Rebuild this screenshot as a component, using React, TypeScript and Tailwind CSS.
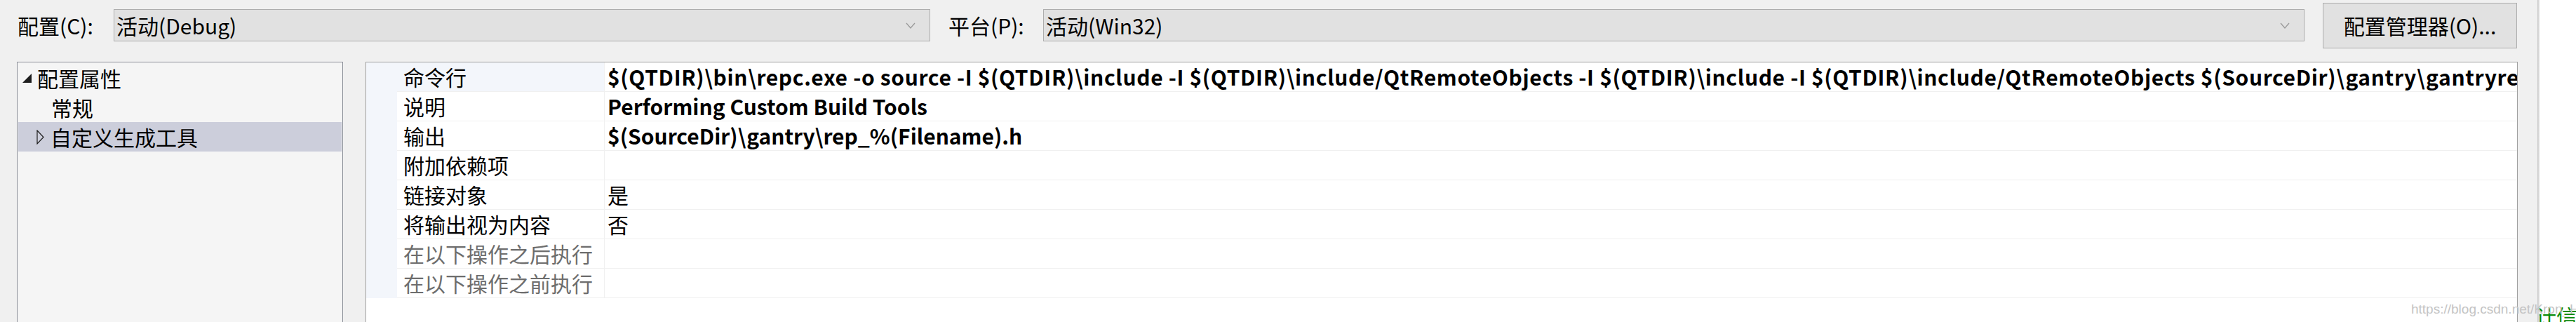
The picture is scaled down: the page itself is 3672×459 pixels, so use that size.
const FONT = "font-['Noto_Sans_CJK_SC','Microsoft_YaHei',sans-serif]";

type Row = { label: string; value?: string; bold?: boolean; muted?: boolean; wide?: boolean };

const ROWS: Row[] = [
  {
    label: '命令行',
    value:
      '$(QTDIR)\\bin\\repc.exe -o source -I $(QTDIR)\\include -I $(QTDIR)\\include/QtRemoteObjects -I $(QTDIR)\\include -I $(QTDIR)\\include/QtRemoteObjects $(SourceDir)\\gantry\\gantryremote.rep $(SourceDir)\\gantry\\rep_%(Filename).h',
    bold: true,
    wide: true,
  },
  { label: '说明', value: 'Performing Custom Build Tools', bold: true },
  { label: '输出', value: '$(SourceDir)\\gantry\\rep_%(Filename).h', bold: true },
  { label: '附加依赖项' },
  { label: '链接对象', value: '是' },
  { label: '将输出视为内容', value: '否' },
  { label: '在以下操作之后执行', muted: true },
  { label: '在以下操作之前执行', muted: true },
];

function Chevron() {
  return (
    <svg width="14" height="9" viewBox="0 0 14 9" className="shrink-0">
      <polyline points="1,1 7,8 13,1" fill="none" stroke="#9a9a9a" strokeWidth="1.3" />
    </svg>
  );
}

function Combo({ text, width }: { text: string; width: string }) {
  return (
    <div
      className={`${width} mt-[13px] h-[46px] flex items-center justify-between border border-[#adadad] bg-[#e1e1e1] pl-[3px] pr-[20px]`}
    >
      <span className="leading-[44px]">{text}</span>
      <Chevron />
    </div>
  );
}

export default function App() {
  return (
    <div className={`relative flex w-[3672px] h-[459px] overflow-hidden text-[30px] text-black ${FONT}`}>
      <div className="w-[3617px] h-full bg-[#f0f0f0] flex flex-col">
        {/* 顶部 配置/平台 */}
        <div className="flex h-[88px] shrink-0">
          <div className="w-[162px] pl-[25px] pt-[13px] leading-[46px]">配置(C):</div>
          <Combo text="活动(Debug)" width="w-[1164px]" />
          <div className="w-[161px] pl-[26px] pt-[13px] leading-[46px]">平台(P):</div>
          <Combo text="活动(Win32)" width="w-[1798px]" />
          <button className="ml-[26px] mt-[4px] w-[277px] h-[65px] border border-[#adadad] bg-[#e1e1e1] leading-[63px]">
            配置管理器(O)...
          </button>
        </div>

        {/* 树 + 属性表 */}
        <div className="flex flex-1 pl-[24px] gap-[32px]">
          <div className="w-[465px] h-[400px] border border-[#8c9099] bg-[#f5f5f5] p-px">
            <div className="flex items-center h-[42px] pl-[5px]">
              <svg width="15" height="15" viewBox="0 0 15 15" className="mr-[7px]">
                <polygon points="14,1 14,14 1,14" fill="#1e1e1e" />
              </svg>
              <span>配置属性</span>
            </div>
            <div className="flex items-center h-[42px] pl-[47px]">常规</div>
            <div className="flex items-center h-[42px] pl-[26px] bg-[#cccedb]">
              <svg width="11" height="21" viewBox="0 0 11 21" className="mr-[9px]">
                <polygon points="1,1 10,10.5 1,20" fill="none" stroke="#1e1e1e" strokeWidth="1.2" />
              </svg>
              <span>自定义生成工具</span>
            </div>
          </div>

          <div className="w-[3068px] h-[400px] border border-[#a0a0a0] bg-white">
            {ROWS.map((row, i) => (
              <div key={row.label} className="flex h-[42px]">
                <div className="w-[44px] shrink-0 bg-[#f3f6fb]" />
                <div
                  className={`w-[296px] shrink-0 pl-[9px] leading-[41px] border-b border-r border-[#f0f0f0] ${
                    i === 0 ? 'bg-[#f3f6fb]' : 'bg-white'
                  } ${row.muted ? 'text-[#6d6d6d]' : ''}`}
                >
                  {row.label}
                </div>
                <div
                  className={`flex-1 min-w-0 pl-[4px] leading-[41px] whitespace-nowrap overflow-hidden border-b border-[#f0f0f0] ${
                    row.bold ? 'font-bold' : ''
                  } ${row.wide ? 'tracking-[0.65px]' : ''}`}
                >
                  {row.value ?? ''}
                </div>
              </div>
            ))}
          </div>
        </div>
      </div>

      <div className="w-[3px] h-full bg-gradient-to-r from-[#c4c4c4] to-[#e8e8e8]" />
      <div className="flex-1 h-full bg-white relative overflow-hidden">
        <span className="absolute left-[-6px] top-[434px] text-[30px] leading-[32px] whitespace-nowrap text-[#0a8a0a]">计信</span>
      </div>

      {/* 水印 */}
      <span className="absolute left-[3437px] top-[429px] font-['Liberation_Sans',sans-serif] text-[19px] leading-[24px] text-[#c4c4c4]">
        https://blog.csdn.net/Kron_Huge
      </span>
    </div>
  );
}
